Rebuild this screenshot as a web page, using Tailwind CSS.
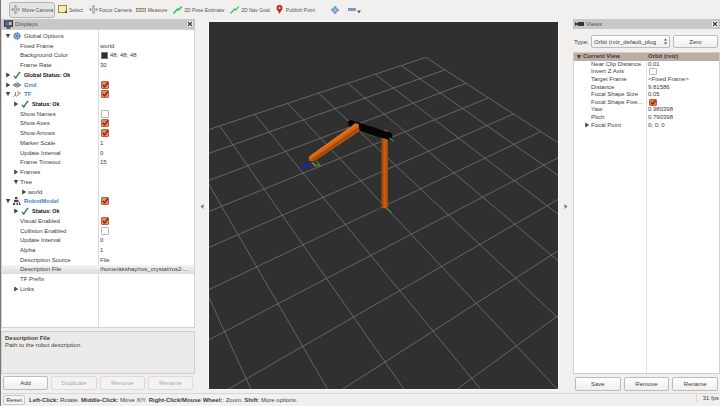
<!DOCTYPE html>
<html lang="en">
<head>
  <meta charset="UTF-8">
  <meta name="viewport" content="width=device-width, initial-scale=1.0">
  <script src="https://cdn.jsdelivr.net/npm/@tailwindcss/browser@4"></script>
  <title>RViz</title>
</head>
<body class="bg-[#f1f0ef] text-[#3c3c3c] text-[6px] leading-[8px] font-['Liberation_Sans',Arial,sans-serif]">

  <!-- shared icons -->
  <svg class="hidden">
    <symbol id="open" viewBox="0 0 6 6"><path d="M.8 1h4.4L3 5.2z" fill="#444"/></symbol>
    <symbol id="closed" viewBox="0 0 6 6"><path d="M1.2.6v4.8L5.2 3z" fill="#444"/></symbol>
    <symbol id="ok" viewBox="0 0 8 8"><path d="M1 4.8 2.8 7Q4.5 3.5 7.2 1" fill="none" stroke="#1f7a2c" stroke-width="1.3"/></symbol>
    <symbol id="tick" viewBox="0 0 8 8"><path d="M1.8 3.8 3.5 5.8 7 1.5" fill="none" stroke="#5a2a1a" stroke-width="1.2"/></symbol>
    <symbol id="close" viewBox="0 0 8 8"><rect x=".5" y=".5" width="7" height="7" rx="1" fill="#f8f8f8" stroke="#aaa" stroke-width=".6"/><path d="M2 2 6 6M6 2 2 6" fill="none" stroke="#333" stroke-width="1.1"/></symbol>
    <symbol id="move" viewBox="0 0 10 10"><path d="M5 0 6.5 2h-3zM5 10 3.5 8h3zM0 5l2-1.5v3zM10 5 8 6.5v-3z" fill="#aaa" stroke="#888" stroke-width=".5"/><circle cx="5" cy="5" r="1.8" fill="#ddd" stroke="#777" stroke-width=".8"/></symbol>
  </svg>

  <div class="flex min-h-screen flex-col border-l border-[#777]">
    <header class="flex h-[19px] items-center pl-[8px] text-[5px] text-[#555]">
      <button class="flex h-[16px] w-[46px] items-center gap-[2px] rounded-[3px] border border-[#b5b3b0] bg-[#e6e4e2] px-[1px]">
        <svg class="h-[9px] w-[9px] shrink-0" viewBox="0 0 10 10"><use href="#move"/></svg><span class="whitespace-nowrap">Move Camera</span>
      </button>
      <button class="ml-[3px] flex items-center gap-[1px]">
        <svg class="h-[9px] w-[10px]" viewBox="0 0 10 9"><rect x=".5" y=".5" width="8" height="7" fill="#fbeea0" stroke="#8d8655"/><path d="m6.5 5.5 3 1.5-1.5 1.5z" fill="#444"/></svg>Select
      </button>
      <button class="ml-[6px] flex items-center gap-[1px]">
        <svg class="h-[9px] w-[9px]" viewBox="0 0 10 10"><use href="#move"/></svg>Focus Camera
      </button>
      <button class="ml-[4px] flex items-center gap-[2px]">
        <svg class="h-[8px] w-[10px]" viewBox="0 0 10 8"><rect x=".5" y="2.5" width="9" height="3" fill="#e6dfaa" stroke="#8a8462" stroke-width=".8"/><path d="M3 3v1.5M5 3v1.5M7 3v1.5" stroke="#777" stroke-width=".5"/></svg>Measure
      </button>
      <button class="ml-[6px] flex items-center gap-[2px]">
        <svg class="h-[8px] w-[9px]" viewBox="0 0 9 8"><path d="M.5 7.500 4.5 3 5.5 4 9 .5" fill="none" stroke="#1fc52f" stroke-width="1.3"/></svg>2D Pose Estimate
      </button>
      <button class="ml-[6px] flex items-center gap-[2px]">
        <svg class="h-[8px] w-[9px]" viewBox="0 0 9 8"><path d="M.5 7.5 4.5 3 5.5 4 9 .5" fill="none" stroke="#2fd35c" stroke-width="1.3"/></svg>2D Nav Goal
      </button>
      <button class="ml-[6px] flex items-center gap-[3px]">
        <svg class="h-[9px] w-[7px]" viewBox="0 0 7 9"><path d="M3.5 9C2.8 6.5.5 5 .5 3a3 3 0 0 1 6 0c0 2-2.3 3.500-3 6z" fill="#b92c1c"/><circle cx="3.5" cy="3" r="1.1" fill="#f3d9d5"/></svg>Publish Point
      </button>
      <button class="ml-[16px]" aria-label="Add tool">
        <svg class="h-[8px] w-[8px]" viewBox="0 0 8 8"><path d="M3 .8h2V3h2.2v2H5v2.200H3V5H.8V3H3z" fill="#a5c0e3" stroke="#4d78b3" stroke-width=".8"/></svg>
      </button>
      <button class="ml-[9px]" aria-label="Remove tool">
        <svg class="h-[8px] w-[14px]" viewBox="0 0 14 8"><rect x=".5" y="2.5" width="7" height="2" fill="#7f9fce" stroke="#4d78b3" stroke-width=".6"/><path d="M9 4.5h4L11 7.2z" fill="#555"/></svg>
      </button>
    </header>

    <main class="flex flex-1">
      <!-- Displays -->
      <section class="flex w-[194px] flex-col">
        <div class="flex h-[10px] items-center gap-[2px] bg-[#c9c8c7] pr-[1px] pl-[3px] text-[#555]">
          <svg class="h-[9px] w-[9px]" viewBox="0 0 9 9"><rect x=".5" y=".8" width="8" height="5.5" fill="#4f6cae" stroke="#333"/><path d="M5 2h2.5v3H5z" fill="#d8c45c"/><path d="M2.5 8h4" stroke="#333" stroke-width="1.4"/></svg>
          <h2 class="flex-1">Displays</h2>
          <button aria-label="Close Displays"><svg class="block h-[8px] w-[8px]"><use href="#close"/></svg></button>
        </div>

        <div class="flex-1 border border-[#d5d3d1] bg-white bg-[linear-gradient(#dcdad8,#dcdad8)] bg-[length:1px_100%] bg-[position:96px_0] bg-no-repeat pt-[1px]">
          <table class="h-[263px] w-full table-fixed border-collapse whitespace-nowrap">
            <colgroup><col class="w-[97px]"><col></colgroup>
            <tbody>
              <tr><td><div class="flex items-center pl-[3px]"><svg class="mr-[2px] h-[6px] w-[6px]"><use href="#open"/></svg><svg class="mr-[3px] h-[8px] w-[8px]" viewBox="0 0 8 8"><circle cx="4" cy="4" r="3" fill="#8fb0da" stroke="#4779b8" stroke-width="1.4" stroke-dasharray="1.2 .5"/><circle cx="4" cy="4" r="1.2" fill="#5f8bc4"/></svg>Global Options</div></td><td></td></tr>
              <tr><td class="pl-[18px]">Fixed Frame</td><td class="pl-[1px]">world</td></tr>
              <tr><td class="pl-[18px]">Background Color</td><td class="pl-[2px]"><div class="flex items-center gap-[2px]"><span class="h-[7px] w-[7px] border border-[#777] bg-[#303030]"></span>48; 48; 48</div></td></tr>
              <tr><td class="pl-[18px]">Frame Rate</td><td class="pl-[1px]">30</td></tr>
              <tr><td><div class="flex items-center pl-[3px]"><svg class="mr-[2px] h-[6px] w-[6px]"><use href="#closed"/></svg><svg class="mr-[3px] h-[8px] w-[8px]"><use href="#ok"/></svg><span class="font-['Roboto',sans-serif] font-medium text-black">Global Status: Ok</span></div></td><td></td></tr>
              <tr><td><div class="flex items-center pl-[3px]"><svg class="mr-[2px] h-[6px] w-[6px]"><use href="#closed"/></svg><svg class="mr-[3px] h-[8px] w-[8px]" viewBox="0 0 8 8"><path d="M0 4 4 1.8 8 4 4 6.2zM2 2.9l4 2.2M6 2.9 2 5.1" fill="none" stroke="#666" stroke-width=".9"/></svg><label for="grid" class="font-bold text-[#3a7fbf]">Grid</label></div></td><td class="pl-[2px]"><div class="relative h-[8px] w-[8px]"><input id="grid" type="checkbox" checked class="block h-[8px] w-[8px] appearance-none rounded-[1px] border border-[#c3623f] bg-[#ea8560]"><svg class="pointer-events-none absolute inset-0 h-[8px] w-[8px]"><use href="#tick"/></svg></div></td></tr>
              <tr><td><div class="flex items-center pl-[3px]"><svg class="mr-[2px] h-[6px] w-[6px]"><use href="#open"/></svg><svg class="mr-[3px] h-[8px] w-[8px]" viewBox="0 0 8 8"><path d="M.5 6.5 2.5 5V2M4.5 6 5.8 3.5 8 3M5.8 3.5 4.5 1M2.5 5l1 1.5" fill="none" stroke="#6b6558" stroke-width=".8"/></svg><label for="tf" class="font-bold text-[#3a7fbf]">TF</label></div></td><td class="pl-[2px]"><div class="relative h-[8px] w-[8px]"><input id="tf" type="checkbox" checked class="block h-[8px] w-[8px] appearance-none rounded-[1px] border border-[#c3623f] bg-[#ea8560]"><svg class="pointer-events-none absolute inset-0 h-[8px] w-[8px]"><use href="#tick"/></svg></div></td></tr>
              <tr><td><div class="flex items-center pl-[11px]"><svg class="mr-[2px] h-[6px] w-[6px]"><use href="#closed"/></svg><svg class="mr-[3px] h-[8px] w-[8px]"><use href="#ok"/></svg><span class="font-['Roboto',sans-serif] font-medium text-black">Status: Ok</span></div></td><td></td></tr>
              <tr><td class="pl-[18px]"><label for="names">Show Names</label></td><td class="pl-[2px]"><input id="names" type="checkbox" class="block h-[8px] w-[8px] appearance-none rounded-[1px] border border-[#b9b7b5] bg-white"></td></tr>
              <tr><td class="pl-[18px]"><label for="axes">Show Axes</label></td><td class="pl-[2px]"><div class="relative h-[8px] w-[8px]"><input id="axes" type="checkbox" checked class="block h-[8px] w-[8px] appearance-none rounded-[1px] border border-[#c3623f] bg-[#ea8560]"><svg class="pointer-events-none absolute inset-0 h-[8px] w-[8px]"><use href="#tick"/></svg></div></td></tr>
              <tr><td class="pl-[18px]"><label for="arrows">Show Arrows</label></td><td class="pl-[2px]"><div class="relative h-[8px] w-[8px]"><input id="arrows" type="checkbox" checked class="block h-[8px] w-[8px] appearance-none rounded-[1px] border border-[#c3623f] bg-[#ea8560]"><svg class="pointer-events-none absolute inset-0 h-[8px] w-[8px]"><use href="#tick"/></svg></div></td></tr>
              <tr><td class="pl-[18px]">Marker Scale</td><td class="pl-[1px]">1</td></tr>
              <tr><td class="pl-[18px]">Update Interval</td><td class="pl-[1px]">0</td></tr>
              <tr><td class="pl-[18px]">Frame Timeout</td><td class="pl-[1px]">15</td></tr>
              <tr><td><div class="flex items-center gap-[1px] pl-[11px]"><svg class="h-[6px] w-[6px]"><use href="#closed"/></svg>Frames</div></td><td></td></tr>
              <tr><td><div class="flex items-center gap-[1px] pl-[11px]"><svg class="h-[6px] w-[6px]"><use href="#open"/></svg>Tree</div></td><td></td></tr>
              <tr><td><div class="flex items-center gap-[1px] pl-[19px]"><svg class="h-[6px] w-[6px]"><use href="#closed"/></svg>world</div></td><td></td></tr>
              <tr><td><div class="flex items-center pl-[3px]"><svg class="mr-[2px] h-[6px] w-[6px]"><use href="#open"/></svg><svg class="mr-[3px] h-[8px] w-[8px]" viewBox="0 0 8 8"><path d="M2 0h2.5v2H2zM1 2.800h4.500v2.400H1zM0 6h2v2H0zM3.500 6H5v2H3.500zM6 5h1v2.200h1V8H6z" fill="#444"/></svg><label for="robot" class="font-bold text-[#3a7fbf]">RobotModel</label></div></td><td class="pl-[2px]"><div class="relative h-[8px] w-[8px]"><input id="robot" type="checkbox" checked class="block h-[8px] w-[8px] appearance-none rounded-[1px] border border-[#c3623f] bg-[#ea8560]"><svg class="pointer-events-none absolute inset-0 h-[8px] w-[8px]"><use href="#tick"/></svg></div></td></tr>
              <tr><td><div class="flex items-center pl-[11px]"><svg class="mr-[2px] h-[6px] w-[6px]"><use href="#closed"/></svg><svg class="mr-[3px] h-[8px] w-[8px]"><use href="#ok"/></svg><span class="font-['Roboto',sans-serif] font-medium text-black">Status: Ok</span></div></td><td></td></tr>
              <tr><td class="pl-[18px]"><label for="visual">Visual Enabled</label></td><td class="pl-[2px]"><div class="relative h-[8px] w-[8px]"><input id="visual" type="checkbox" checked class="block h-[8px] w-[8px] appearance-none rounded-[1px] border border-[#c3623f] bg-[#ea8560]"><svg class="pointer-events-none absolute inset-0 h-[8px] w-[8px]"><use href="#tick"/></svg></div></td></tr>
              <tr><td class="pl-[18px]"><label for="collision">Collision Enabled</label></td><td class="pl-[2px]"><input id="collision" type="checkbox" class="block h-[8px] w-[8px] appearance-none rounded-[1px] border border-[#b9b7b5] bg-white"></td></tr>
              <tr><td class="pl-[18px]">Update Interval</td><td class="pl-[1px]">0</td></tr>
              <tr><td class="pl-[18px]">Alpha</td><td class="pl-[1px]">1</td></tr>
              <tr><td class="pl-[18px]">Description Source</td><td class="pl-[1px]">File</td></tr>
              <tr class="bg-linear-to-b from-[#f3f3f3] to-[#dadada]"><td class="pl-[18px]">Description File</td><td class="pl-[1px]">/home/akshay/ros_crystal/ros2-...</td></tr>
              <tr><td class="pl-[18px]">TF Prefix</td><td></td></tr>
              <tr><td><div class="flex items-center gap-[1px] pl-[11px]"><svg class="h-[6px] w-[6px]"><use href="#closed"/></svg>Links</div></td><td></td></tr>
            </tbody>
          </table>
        </div>

        <div class="mt-[3px] h-[43px] border border-[#d0cecc] bg-[#edebe9] px-[3px] pt-[3px] leading-[7px]">
          <p class="font-bold">Description File</p>
          <p>Path to the robot description.</p>
        </div>
        <div class="grid grid-cols-4 gap-[3px] px-[2px] pt-[2px] pb-[3px]">
          <button class="h-[14px] rounded-[2px] border border-[#bdbbb9] bg-linear-to-b from-white to-[#f0efee]">Add</button>
          <button disabled class="h-[14px] rounded-[2px] border border-[#dddbd9] bg-[#f4f3f2] text-[#aaa]">Duplicate</button>
          <button disabled class="h-[14px] rounded-[2px] border border-[#dddbd9] bg-[#f4f3f2] text-[#aaa]">Remove</button>
          <button disabled class="h-[14px] rounded-[2px] border border-[#dddbd9] bg-[#f4f3f2] text-[#aaa]">Rename</button>
        </div>
      </section>

      <button class="flex w-[13px] items-center justify-center" aria-label="Hide left panel"><svg class="h-[5px] w-[4px]" viewBox="0 0 4 5"><path d="M3.5 0v5L.5 2.5z" fill="#777"/></svg></button>

      <!-- 3D view -->
      <section class="flex flex-1 flex-col pt-[2px] pb-[3px]">
        <svg class="min-h-0 w-full flex-1 border border-[#fafafa] bg-[#303030]" viewBox="0 0 350 367" preserveAspectRatio="xMidYMid slice">
          <g id="ground" class="stroke-[#747474]" stroke-width=".8"></g>
          <path d="m184 113 11-5M162 189l10-3" stroke="#5a2a24" stroke-width=".8"/>
          <path d="M173 109q3-3 6.500 0v76q-3 3-6.500 0z" fill="#a9490b"/>
          <path d="M175 113h3v73h-3z" fill="#c45c14"/>
          <path d="m139 100 3-2 41 13 1 5-3 2-32-9-8-4z" fill="#050505"/>
          <path d="m151 109 16 6" stroke="#41601f" stroke-width=".8"/>
          <path d="m181 116 4 3M178 186l5 5" stroke="#1f9a4a" stroke-width="1.2"/>
          <path d="m147 101 3 1 1 7-45 30-5 0-1-4z" fill="#d9640f"/>
          <path d="m151 108-45 31-4-1 48-33z" fill="#a34a0d"/>
          <path d="m147 103-45 31" stroke="#ee7d24"/>
          <path d="m92 145 9-6M94 145l9-3M92 145l11-1M96 142l5 2" stroke="#2424a8" stroke-width="1.3"/>
          <path d="m103 141 7 3M104 140l3 5M108 139l4 5" stroke="#8c9a1c"/>
          <path d="m105 142 7 2" stroke="#2d9130" stroke-width=".8"/>
        </svg>
      </section>

      <button class="flex w-[14px] items-center justify-center" aria-label="Hide right panel"><svg class="h-[5px] w-[4px]" viewBox="0 0 4 5"><path d="M.5 0v5l3-2.5z" fill="#777"/></svg></button>

      <!-- Views -->
      <section class="flex w-[147px] flex-col">
        <div class="flex h-[10px] items-center gap-[2px] bg-[#c9c8c7] pr-[1px] pl-[2px] text-[#555]">
          <svg class="h-[6px] w-[9px]" viewBox="0 0 9 6"><path d="M0 1l3 1.5V1h6v4H3V3.5L0 5z" fill="#333"/></svg>
          <h2 class="flex-1">Views</h2>
          <button aria-label="Close Views"><svg class="block h-[8px] w-[8px]"><use href="#close"/></svg></button>
        </div>
        <div class="flex items-center pt-[6px] pb-[4px] pr-[2px] pl-[1px]">
          <label for="type" class="w-[17px]">Type:</label>
          <div class="relative mr-[3px] w-[79px]">
            <select id="type" class="block h-[13px] w-full appearance-none rounded-[2px] border border-[#bdbbb9] bg-linear-to-b from-white to-[#f0efee] pr-[10px] pl-[2px] leading-[8px]"><option>Orbit (rviz_default_plug</option></select>
            <svg class="pointer-events-none absolute top-[3px] right-[2px] h-[7px] w-[5px]" viewBox="0 0 5 7"><path d="M.8 2.5h3.4L2.5.5zM.8 4.500h3.400L2.500 6.500z" fill="#555"/></svg>
          </div>
          <button class="h-[13px] flex-1 rounded-[2px] border border-[#bdbbb9] bg-linear-to-b from-white to-[#f0efee]">Zero</button>
        </div>
        <div class="flex-1 border border-[#d0cecc] bg-white bg-[linear-gradient(#e4e2e0,#e4e2e0)] bg-[length:1px_100%] bg-[position:72px_0] bg-no-repeat">
          <table class="h-[76px] w-full table-fixed border-collapse leading-[7px] whitespace-nowrap">
            <colgroup><col class="w-[73px]"><col></colgroup>
            <tbody>
              <tr class="bg-[#bcaea4] text-left"><th class="p-0"><div class="flex items-center gap-[1px] pl-[2px]"><svg class="h-[6px] w-[6px]"><use href="#open"/></svg>Current View</div></th><th class="pl-[1px]">Orbit (rviz)</th></tr>
              <tr><td class="pl-[17px]">Near Clip Distance</td><td class="pl-[1px]">0.01</td></tr>
              <tr><td class="pl-[17px]"><label for="invert">Invert Z Axis</label></td><td class="pl-[2px]"><input id="invert" type="checkbox" class="block h-[7px] w-[8px] appearance-none rounded-[1px] border border-[#b9b7b5] bg-white"></td></tr>
              <tr><td class="pl-[17px]">Target Frame</td><td class="pl-[1px]">&lt;Fixed Frame&gt;</td></tr>
              <tr><td class="pl-[17px]">Distance</td><td class="pl-[1px]">9.81586</td></tr>
              <tr><td class="pl-[17px]">Focal Shape Size</td><td class="pl-[1px]">0.05</td></tr>
              <tr><td class="pl-[17px]"><label for="fixed">Focal Shape Fixe...</label></td><td class="pl-[2px]"><div class="relative h-[7px] w-[8px]"><input id="fixed" type="checkbox" checked class="block h-[7px] w-[8px] appearance-none rounded-[1px] border border-[#c3623f] bg-[#ea7448]"><svg class="pointer-events-none absolute inset-0 h-[7px] w-[8px]"><use href="#tick"/></svg></div></td></tr>
              <tr><td class="pl-[17px]">Yaw</td><td class="pl-[1px]">0.980398</td></tr>
              <tr><td class="pl-[17px]">Pitch</td><td class="pl-[1px]">0.790398</td></tr>
              <tr><td><div class="flex items-center gap-[1px] pl-[10px]"><svg class="h-[6px] w-[6px]"><use href="#closed"/></svg>Focal Point</div></td><td class="pl-[1px]">0; 0; 0</td></tr>
            </tbody>
          </table>
        </div>
        <div class="grid grid-cols-3 gap-[3px] px-[2px] pt-[3px] pb-[2px]">
          <button class="h-[14px] rounded-[2px] border border-[#bdbbb9] bg-linear-to-b from-white to-[#f0efee]">Save</button>
          <button class="h-[14px] rounded-[2px] border border-[#bdbbb9] bg-linear-to-b from-white to-[#f0efee]">Remove</button>
          <button class="h-[14px] rounded-[2px] border border-[#bdbbb9] bg-linear-to-b from-white to-[#f0efee]">Rename</button>
        </div>
      </section>
    </main>

    <footer class="flex h-[13px] items-center border-t border-[#d8d6d4] pl-[2px]">
      <button class="h-[10px] w-[22px] rounded-[2px] border border-[#c8c6c4] bg-[#f6f5f4] leading-[8px]">Reset</button>
      <p class="flex-1 pl-[4px]"><b>Left-Click:</b> Rotate. <b>Middle-Click:</b> Move X/Y. <b>Right-Click/Mouse Wheel:</b>: Zoom. <b>Shift</b>: More options.</p>
      <span class="self-start border-l border-[#d8d6d4] pr-[1px] pl-[6px]">31 fps</span>
    </footer>
  </div>

<script>
  // 10 x 10 ground grid seen by the orbit camera
  const distance = 9.81586, yaw = 0.980398, pitch = 0.790398;
  const focal = 443, cx = 176, cy = 184;

  function project(x, y) {
    const ahead = -x * Math.cos(yaw) - y * Math.sin(yaw);
    const side = -x * Math.sin(yaw) + y * Math.cos(yaw);
    const depth = distance + ahead * Math.cos(pitch);
    return [cx + focal * side / depth, cy - focal * ahead * Math.sin(pitch) / depth];
  }

  function addLine(a, b) {
    const line = document.createElementNS("http://www.w3.org/2000/svg", "line");
    line.setAttribute("x1", a[0]);
    line.setAttribute("y1", a[1]);
    line.setAttribute("x2", b[0]);
    line.setAttribute("y2", b[1]);
    document.getElementById("ground").appendChild(line);
  }

  for (let i = -5; i <= 5; i++) {
    addLine(project(i, -5), project(i, 5));
    addLine(project(-5, i), project(5, i));
  }
</script>
</body>
</html>
